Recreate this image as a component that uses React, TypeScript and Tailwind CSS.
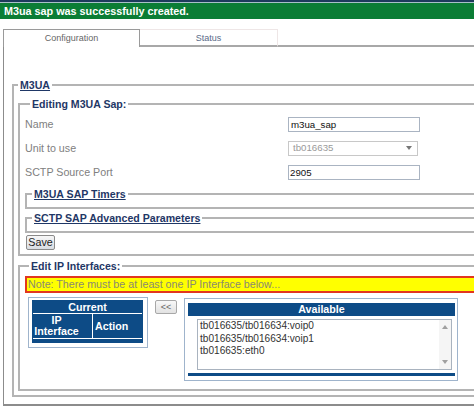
import React from 'react';

const fieldset = 'border-2 border-[#b4b4b4] min-w-0';
const legend = "text-[10.6px] leading-[14px] font-bold text-[#1f3766] px-[2px]";

const Triangle: React.FC<{ down?: boolean; className?: string }> = ({ down, className }) => (
  <svg width="6" height="4" viewBox="0 0 6 4" className={className}>
    {down ? <path d="M0 0 H6 L3 4 Z" fill="currentColor" /> : <path d="M0 4 H6 L3 0 Z" fill="currentColor" />}
  </svg>
);

const FormRow: React.FC<{ label: string; children: React.ReactNode }> = ({ label, children }) => (
  <div className="flex items-center h-[24px]">
    <div className="w-[263px] text-[10.7px] text-[#808080]">{label}</div>
    {children}
  </div>
);

const App: React.FC = () => {
  const available = ['tb016635/tb016634:voip0', 'tb016635/tb016634:voip1', 'tb016635:eth0'];

  return (
    <div className="w-[474px] h-[412px] overflow-hidden bg-white font-['Liberation_Sans',Arial,sans-serif]">
      {/* Top strip and status banner */}
      <div className="h-[2px] bg-[#1d3b5c]" />
      <div className="h-[1px] bg-[#a9c0c9]" />
      <div className="h-[16px] bg-[#0b7d35] flex items-center pl-[4px]">
        <span className="text-white font-bold text-[10.8px]">M3ua sap was successfully created.</span>
      </div>

      {/* Tabs */}
      <div className="flex w-[600px] ml-[3px] mt-[10px]">
        <div className="w-[137px] h-[18px] border-t border-l border-r border-[#9a9a9a] flex items-center justify-center text-[9px] text-[#666]">
          Configuration
        </div>
        <div className="w-[138px] h-[18px] pt-[2px] border-t border-r border-[#eee6e6] border-b-2 border-b-[#a8a8a8] flex items-center justify-center text-[9px] text-[#5a6a88]">
          Status
        </div>
        <div className="flex-1 border-b-2 border-[#a8a8a8]" />
      </div>

      {/* Panel */}
      <div className="w-[600px] ml-[3px] border-l border-b-2 border-[#8c8c8c] pt-[31px] pb-[7px]">
        <fieldset className={`${fieldset} ml-[8px] pb-[4px]`}>
          <legend className={`${legend} ml-[4px] underline`}>M3UA</legend>

          {/* Editing M3UA Sap */}
          <fieldset className={`${fieldset} ml-[4px] mt-[5px] pl-[5px] pb-[4px]`}>
            <legend className={`${legend} ml-[5px]`}>Editing M3UA Sap:</legend>
            <div className="pt-[1px]">
              <FormRow label="Name">
                <input
                  readOnly
                  defaultValue="m3ua_sap"
                  className="w-[132px] h-[15px] border border-[#aab4c2] px-[2px] text-[9.7px] text-[#111] outline-none"
                />
              </FormRow>
              <FormRow label="Unit to use">
                <div className="w-[130px] h-[15px] border border-[#c8c8c8] flex items-center justify-between pl-[4px] pr-[5px] text-[9.7px] text-[#9a9a9a]">
                  <span>tb016635</span>
                  <Triangle down className="text-[#777]" />
                </div>
              </FormRow>
              <FormRow label="SCTP Source Port">
                <input
                  readOnly
                  defaultValue="2905"
                  className="w-[132px] h-[15px] border border-[#aab4c2] px-[1px] text-[9.7px] text-[#111] outline-none"
                />
              </FormRow>
            </div>

            <fieldset className={`${fieldset} mt-[3px] pb-[6px]`}>
              <legend className={`${legend} ml-[5px] underline`}>M3UA SAP Timers</legend>
            </fieldset>
            <fieldset className={`${fieldset} mt-[2px] pb-[6px]`}>
              <legend className={`${legend} ml-[5px] underline`}>SCTP SAP Advanced Parameters</legend>
            </fieldset>

            <button className="block mt-[2px] ml-[1px] w-[29px] h-[15px] border border-[#8a8a8a] rounded-[2px] bg-gradient-to-b from-[#f7f7f7] to-[#d9dde3] text-[10.7px] leading-[13px] text-[#222]">
              Save
            </button>
          </fieldset>

          {/* Edit IP Interfaces */}
          <fieldset className={`${fieldset} ml-[4px] mt-[3px] pl-[5px] pb-[8px]`}>
            <legend className={`${legend} ml-[4px]`}>Edit IP Interfaces:</legend>

            <div className="mt-[3px] h-[17px] bg-[#ffff00] border-2 border-[#e2371f] flex items-center pl-[1px] text-[10.7px] text-[#8a8a70]">
              Note: There must be at least one IP Interface below...
            </div>

            <div className="flex items-start mt-[4px] ml-[3px]">
              {/* Current */}
              <div className="w-[120px] h-[51px] border border-[#9fb4cc] pt-[2px] pl-[3px] pr-[4px]">
                <div className="border border-[#0d4b86] bg-white flex flex-col gap-[1px] text-white font-bold text-[10.7px]">
                  <div className="h-[12px] bg-[#0d4b86] flex items-center justify-center leading-none">Current</div>
                  <div className="flex gap-[1px] h-[24px]">
                    <div className="w-[59px] bg-[#0d4b86] flex flex-col items-center justify-center leading-[11px] pr-[12px]">
                      <span>IP</span>
                      <span>Interface</span>
                    </div>
                    <div className="flex-1 bg-[#0d4b86] flex items-center pl-[2px]">Action</div>
                  </div>
                  <div className="h-[3px] bg-[#0d4b86]" />
                </div>
              </div>

              {/* Move button */}
              <button className="ml-[7px] mt-[3px] w-[22px] h-[14px] border border-[#a8a8a8] rounded-[2px] bg-gradient-to-b from-[#f8f8f8] to-[#e2e2e2] text-[9px] leading-[12px] text-[#666]">
                &lt;&lt;
              </button>

              {/* Available */}
              <div className="ml-[7px] mt-[1px] w-[274px] h-[83px] border border-[#9fb4cc] pt-[4px] pl-[3px] pr-[2px]">
                <div className="h-[13px] bg-[#0d4b86] flex items-center justify-center text-white font-bold text-[10.7px]">
                  Available
                </div>
                <div className="mt-[3px] ml-[9px] mr-[3px] h-[51px] border border-[#a9b3bf] flex">
                  <div className="flex-1 pl-[2px] text-[10.1px] leading-[12.5px] text-[#333]">
                    {available.map((item) => (
                      <div key={item}>{item}</div>
                    ))}
                  </div>
                  <div className="w-[12px] bg-[#f5f5f5] flex flex-col items-center justify-between py-[5px] text-[#a0a0a0]">
                    <Triangle />
                    <Triangle down />
                  </div>
                </div>
                <div className="mt-[3px] h-[3px] bg-[#0d4b86]" />
              </div>
            </div>
          </fieldset>
        </fieldset>
      </div>
    </div>
  );
};

export default App;
